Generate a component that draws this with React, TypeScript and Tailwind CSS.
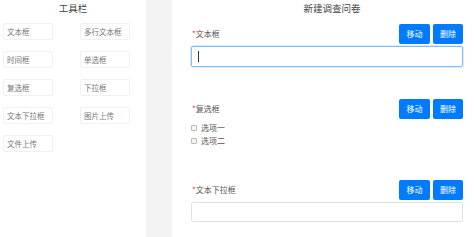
import React from "react";

const font = { fontFamily: '"Noto Sans CJK SC", "Noto Sans", sans-serif' };

const tools = ["文本框", "多行文本框", "时间框", "单选框", "复选框", "下拉框", "文本下拉框", "图片上传", "文件上传"];

function Header({ label }: { label: string }) {
  return (
    <div className="flex items-center justify-between h-[20px]">
      <div className="text-[8px] text-[#555] leading-none pl-[1px]">
        <span className="text-[#e33]">*</span>
        {label}
      </div>
      <div className="flex gap-[3px]">
        <button className="w-[31px] h-[20px] rounded-[2px] bg-[#007bff] text-white text-[8px] leading-none">移动</button>
        <button className="w-[30px] h-[20px] rounded-[2px] bg-[#007bff] text-white text-[8px] leading-none">删除</button>
      </div>
    </div>
  );
}

export default function App() {
  return (
    <div className="flex w-[474px] h-[237px] bg-white overflow-hidden" style={font}>
      <div className="w-[146px] shrink-0 flex flex-col">
        <div className="h-[17px] flex items-center justify-center text-[9.5px] text-[#444] leading-none pt-[1px]">工具栏</div>
        <div className="grid grid-cols-[77px_66px] gap-y-[11px] pl-[3px] mt-[6px]">
          {tools.map((t) => (
            <div key={t} className="w-[50px] h-[17px] border border-[#f0f0f0] rounded-[2px] flex items-center pl-[3px] text-[7.5px] text-[#777] leading-none">
              {t}
            </div>
          ))}
        </div>
      </div>
      <div className="w-[26px] shrink-0 bg-[#f3f3f3]" />
      <div className="flex-1 flex flex-col pl-[19px] pr-[11px]">
        <div className="h-[17px] flex items-center justify-center text-[9.5px] text-[#444] leading-none pt-[1px] pl-[10px]">新建调查问卷</div>
        <div className="mt-[7px] flex flex-col">
          <Header label="文本框" />
          <div className="mt-[2px] h-[21px] border border-[#80bdff] rounded-[2px] shadow-[0_0_0_1px_rgba(0,123,255,0.15)] flex items-center pl-[6px]">
            <span className="w-px h-[11px] bg-[#333]" />
          </div>
        </div>
        <div className="mt-[32px] flex flex-col">
          <Header label="复选框" />
          <div className="mt-[2px] flex flex-col text-[8px] text-[#555] leading-none">
            <label className="flex items-center h-[13px]">
              <span className="w-[6px] h-[6px] border border-[#bbb] rounded-[1px] bg-[#f4f4f4] mr-[4px]" />
              选项一
            </label>
            <label className="flex items-center h-[13px]">
              <span className="w-[6px] h-[6px] border border-[#bbb] rounded-[1px] bg-[#f4f4f4] mr-[4px]" />
              选项二
            </label>
          </div>
        </div>
        <div className="mt-[33px] flex flex-col">
          <Header label="文本下拉框" />
          <div className="mt-[2px] h-[20px] border border-[#e2e2e2] rounded-[2px]" />
        </div>
      </div>
    </div>
  );
}
